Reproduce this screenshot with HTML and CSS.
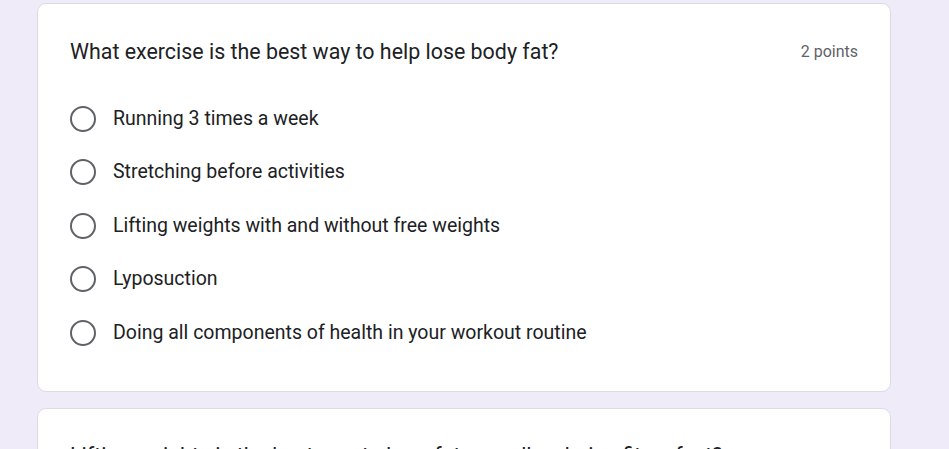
FILE: index.html
```html
<!DOCTYPE html>
<html lang="en">
<head>
<meta charset="utf-8">
<title>Quiz</title>
<link rel="stylesheet" href="styles.css">
</head>
<body>
<main class="form">
  <section class="card">
    <div class="q-head">
      <div class="q-title">What exercise is the best way to help lose body fat?</div>
      <div class="q-points">2 points</div>
    </div>
    <div class="options">
      <label class="option"><span class="radio"></span><span class="opt-text">Running 3 times a week</span></label>
      <label class="option"><span class="radio"></span><span class="opt-text">Stretching before activities</span></label>
      <label class="option"><span class="radio"></span><span class="opt-text">Lifting weights with and without free weights</span></label>
      <label class="option"><span class="radio"></span><span class="opt-text">Lyposuction</span></label>
      <label class="option"><span class="radio"></span><span class="opt-text">Doing all components of health in your workout routine</span></label>
    </div>
  </section>
  <section class="card">
    <div class="q-head">
      <div class="q-title">Lifting weights is the best way to burn fat as well as being fit so fast?</div>
    </div>
  </section>
</main>
</body>
</html>
```
FILE: styles.css
```css
html, body {
  margin: 0;
  padding: 0;
  background: #f0ebf8;
  font-family: Roboto, "Liberation Sans", Arial, sans-serif;
  color: #202124;
  height: 449px;
  overflow: hidden;
}

.form {
  display: flex;
  flex-direction: column;
  gap: 16px;
  padding: 3px 0 0 37px;
  width: 854px;
}

.card {
  background: #fff;
  border: 1px solid #dadce0;
  border-radius: 9px;
  padding: 34px 32px 45.5px 32px;
}

.q-head {
  display: flex;
  justify-content: space-between;
  align-items: center;
}

.q-title {
  font-size: 21.4px;
  line-height: 25px;
}

.q-points {
  font-size: 16px;
  line-height: 24px;
  color: #5f6368;
  padding-top: 2px;
}

.options {
  display: flex;
  flex-direction: column;
  gap: 27.6px;
  margin-top: 41.5px;
}

.option {
  display: flex;
  align-items: center;
  height: 26px;
}

.radio {
  width: 26px;
  height: 26px;
  box-sizing: border-box;
  border: 2.5px solid #5f6368;
  border-radius: 50%;
  flex: none;
}

.opt-text {
  margin-left: 17px;
  font-size: 19.5px;
  line-height: 24px;
}
```
